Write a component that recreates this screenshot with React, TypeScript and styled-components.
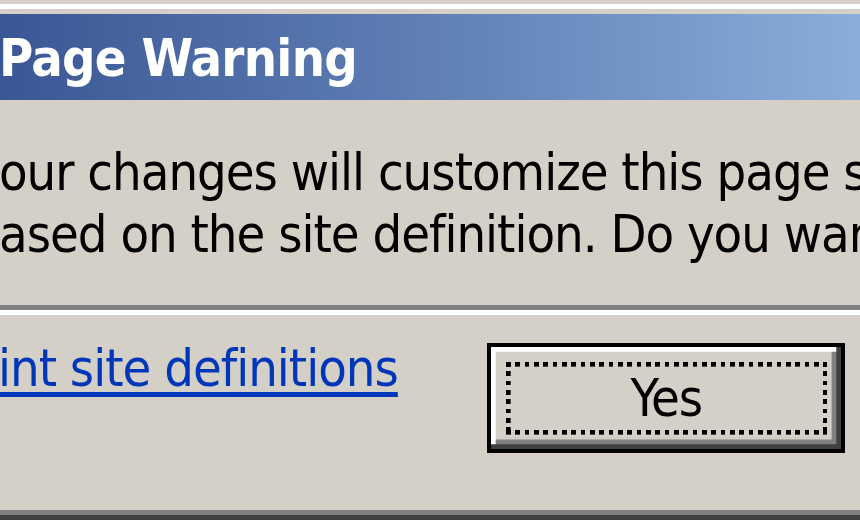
import React from "react";
import styled, { createGlobalStyle } from "styled-components";

const Global = createGlobalStyle`
  html, body {
    margin: 0;
    padding: 0;
    background: #d4d0c8;
    overflow: hidden;
  }
`;

const FONT = `"DejaVu Sans Condensed", "DejaVu Sans", "Liberation Sans", sans-serif`;

const Window = styled.div`
  width: 860px;
  height: 520px;
  background: #d4d0c8;
  display: flex;
  flex-direction: column;
  overflow: hidden;
  font-family: ${FONT};
  font-stretch: condensed;
  font-size: 52px;
`;

const TopEdge = styled.div`
  height: 5px;
  margin: 4px 0 5px;
  background: #ffffff;
  flex: none;
`;

const TitleBar = styled.div`
  height: 86px;
  flex: none;
  display: flex;
  align-items: flex-start;
  padding-top: 1px;
  box-sizing: border-box;
  background: linear-gradient(to right, #3a5795 0%, #5f7fb5 50%, #8aaed9 100%);
  color: #ffffff;
  font-weight: bold;
  line-height: 86px;
  letter-spacing: -0.7px;
  white-space: nowrap;
`;

const TitleText = styled.span`
  margin-left: -1px;
`;

const Message = styled.p`
  margin: 41px 0 0 -1px;
  line-height: 62px;
  color: #000;
  letter-spacing: -1px;
  white-space: nowrap;
  flex: none;
`;

const Line = styled.span`
  display: block;
`;

const Separator = styled.div`
  flex: none;
  height: 5px;
  margin-top: 40px;
  background: #808080;
  border-bottom: 5px solid #ffffff;
`;

const Footer = styled.div`
  flex: 1;
  display: flex;
  justify-content: space-between;
  align-items: flex-start;
  padding-right: 14.7px;
`;

const HelpLink = styled.a`
  margin: 22px 0 0 -2px;
  line-height: 62px;
  color: #0036b8;
  letter-spacing: -1px;
  white-space: nowrap;
  text-decoration: underline;
  text-decoration-thickness: 4.7px;
  text-underline-offset: 6px;
  cursor: pointer;
`;

const DefaultButton = styled.button`
  position: relative;
  margin-top: 28.3px;
  width: 358px;
  height: 110px;
  box-sizing: border-box;
  border: 4.7px solid #000;
  background: #d4d0c8;
  box-shadow: inset -4.7px -4.7px 0 #404040, inset 4.7px 4.7px 0 #ffffff,
    inset -9.4px -9.4px 0 #808080;
  font: inherit;
  font-stretch: condensed;
  letter-spacing: -1px;
  color: #000;
  line-height: 60px;
  padding: 0 0 1px;
  display: flex;
  align-items: center;
  justify-content: center;

  &::after {
    content: "";
    position: absolute;
    left: 14.7px;
    top: 14.7px;
    right: 14px;
    bottom: 14.3px;
    background:
      repeating-linear-gradient(to right, #000 0 4.67px, transparent 4.67px 9.33px) top left / 100% 4.67px no-repeat,
      repeating-linear-gradient(to right, #000 0 4.67px, transparent 4.67px 9.33px) bottom left / 100% 4.67px no-repeat,
      repeating-linear-gradient(to bottom, #000 0 4.67px, transparent 4.67px 9.33px) top left / 4.67px 100% no-repeat,
      repeating-linear-gradient(to bottom, #000 0 4.67px, transparent 4.67px 9.33px) top right / 4.67px 100% no-repeat;
  }
`;

const BottomEdge = styled.div`
  flex: none;
  height: 5px;
  background: #808080;
  border-bottom: 5px solid #404040;
`;

export default function App() {
  return (
    <>
      <Global />
      <Window>
        <TopEdge />
        <TitleBar>
          <TitleText>Page Warning</TitleText>
        </TitleBar>
        <Message>
          <Line>our changes will customize this page so it is no longer</Line>
          <Line>ased on the site definition. Do you want to continue?</Line>
        </Message>
        <Separator />
        <Footer>
          <HelpLink>int site definitions</HelpLink>
          <DefaultButton>Yes</DefaultButton>
        </Footer>
        <BottomEdge />
      </Window>
    </>
  );
}
